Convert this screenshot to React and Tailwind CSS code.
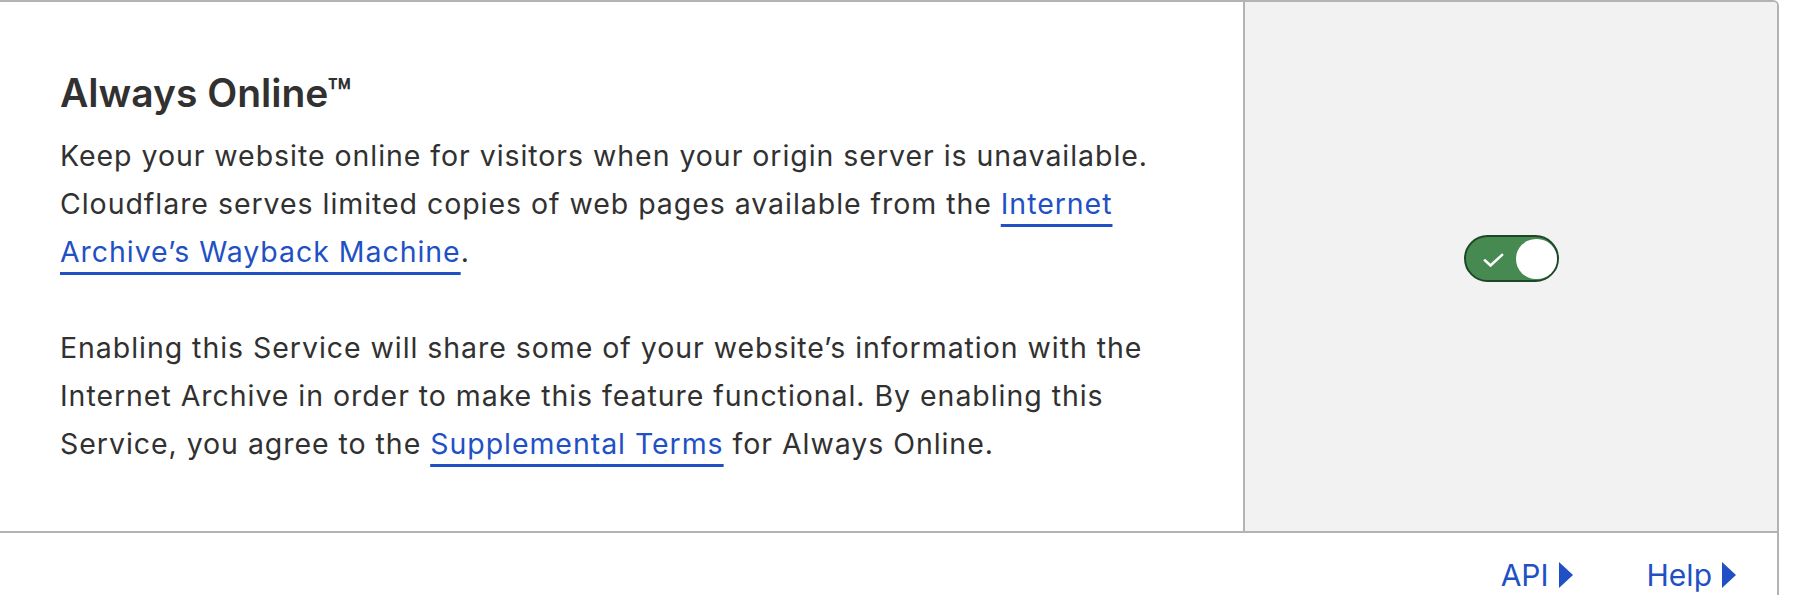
import React from "react";

function Toggle() {
  return (
    <div className="relative w-[95px] h-[47px] rounded-full bg-[#468a52] border-2 border-[#1e4727]">
      <svg className="absolute left-[17px] top-[16px]" width="21" height="15" viewBox="0 0 21 15" fill="none">
        <path d="M2 7.5 L7.5 12.5 L19 2" stroke="white" strokeWidth="2.5" strokeLinecap="square" />
      </svg>
      <div className="absolute right-0 top-[2px] w-[41px] h-[40px] rounded-full bg-white" />
    </div>
  );
}

function Caret() {
  return (
    <svg width="14" height="26" viewBox="0 0 14 26" className="ml-[10px]">
      <polygon points="0,0 14,13 0,26" fill="#1f51c5" />
    </svg>
  );
}

export default function App() {
  const link = "text-[#1f51c5] underline decoration-[2.5px] underline-offset-[10px]";
  return (
    <div
      className="w-[1808px] h-[608px] bg-white overflow-hidden text-[#313131]"
      style={{ fontFamily: "Inter, 'Noto Sans', sans-serif" }}
    >
      <div className="w-[1779px] border-t-2 border-r-2 border-[#b3b3b3] rounded-tr-[6px] overflow-hidden">
        <div className="flex border-b-2 border-[#b3b3b3]">
          <div className="w-[1245px] shrink-0 border-r-2 border-[#b3b3b3] pl-[60px] pt-[67px] pb-[63px]">
            <h2 className="text-[39px] leading-[48px] font-semibold">Always Online™</h2>
            <p className="mt-[15px] text-[28.5px] leading-[48px] tracking-[0.95px] whitespace-nowrap">
              Keep your website online for visitors when your origin server is unavailable.
              <br />
              Cloudflare serves limited copies of web pages available from the{" "}
              <a className={link}>Internet</a>
              <br />
              <a className={link}>Archive’s Wayback Machine</a>.
            </p>
            <p className="mt-[48px] text-[28.5px] leading-[48px] tracking-[0.95px] whitespace-nowrap">
              Enabling this Service will share some of your website’s information with the
              <br />
              Internet Archive in order to make this feature functional. By enabling this
              <br />
              Service, you agree to the <a className={link}>Supplemental Terms</a> for Always Online.
            </p>
          </div>
          <div className="flex-1 bg-[#f2f2f2] flex items-center justify-center pb-[17px]">
            <Toggle />
          </div>
        </div>
        <div className="flex justify-end items-center gap-[74px] pr-[41px] pt-[22px] text-[30px] leading-[40px] text-[#1f51c5]">
          <a className="flex items-center">
            API
            <Caret />
          </a>
          <a className="flex items-center">
            Help
            <Caret />
          </a>
        </div>
      </div>
    </div>
  );
}
